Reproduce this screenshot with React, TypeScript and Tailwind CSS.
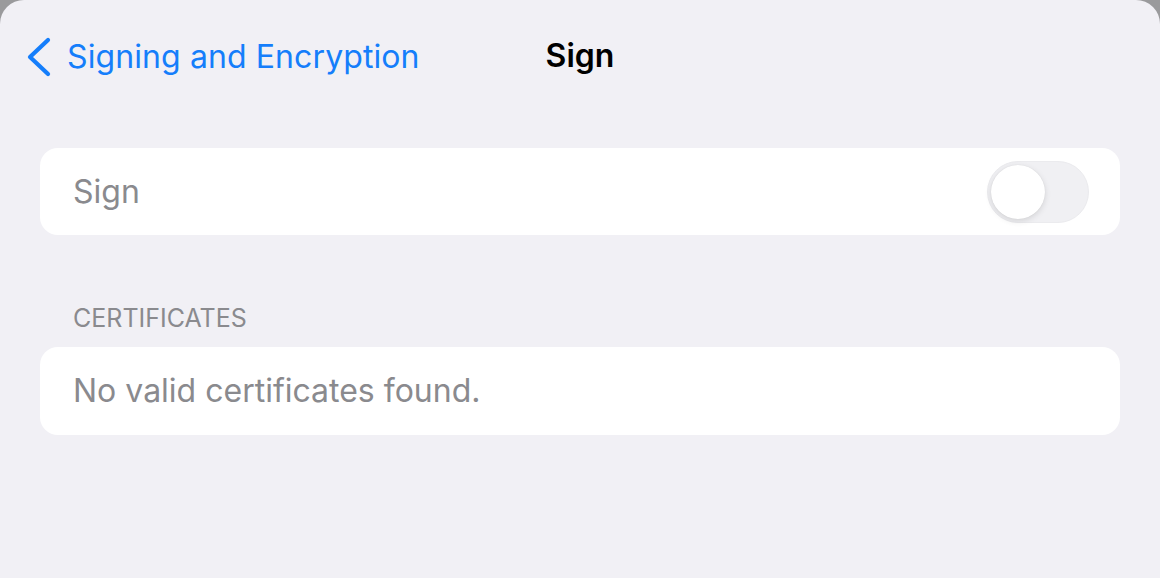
export default function App() {
  return (
    <div className="w-[1160px] h-[578px] bg-[#9a9a9c] overflow-hidden" style={{ fontFamily: "Inter, 'Noto Sans', sans-serif" }}>
      <div className="h-full bg-[#f1f0f5] rounded-t-[24px] flex flex-col">
        {/* nav bar */}
        <div className="relative h-[112px] flex items-center">
          <div className="flex items-center pl-[25px] pt-[1px]">
            <svg width="28" height="40" viewBox="0 0 28 40" fill="none">
              <polyline points="23,3 5,20 23,37" stroke="#157efb" strokeWidth="4.2" strokeLinecap="round" strokeLinejoin="round" />
            </svg>
            <span className="ml-[14px] text-[32px] tracking-[0.1px] text-[#157efb]">Signing and Encryption</span>
          </div>
          <div className="absolute left-0 right-0 top-0 h-[112px] flex items-center justify-center pointer-events-none">
            <span className="text-[32px] font-semibold text-black tracking-[0px]">Sign</span>
          </div>
        </div>

        <div className="px-[40px] pt-[36px] flex flex-col">
          {/* sign toggle */}
          <div className="h-[87px] bg-white rounded-[18px] flex items-center justify-between pl-[33px] pr-[31px]">
            <span className="text-[32px] text-[#8a8a8e]">Sign</span>
            <div className="w-[102px] h-[62px] rounded-full bg-[#f0f0f3] border border-[#ebebee] flex items-center pl-[3px]">
              <div className="w-[54px] h-[54px] rounded-full bg-white shadow-[0_2px_6px_rgba(0,0,0,0.12),0_0_1px_rgba(0,0,0,0.1)]" />
            </div>
          </div>

          {/* certificates */}
          <div className="mt-[71px] pl-[33px] h-[40px] flex items-start">
            <span className="text-[25px] text-[#8a8a8e] leading-none">CERTIFICATES</span>
          </div>
          <div className="mt-[1px] h-[88px] bg-white rounded-[18px] flex items-center pl-[33px]">
            <span className="text-[32px] text-[#8a8a8e]">No valid certificates found.</span>
          </div>
        </div>
      </div>
    </div>
  )
}
